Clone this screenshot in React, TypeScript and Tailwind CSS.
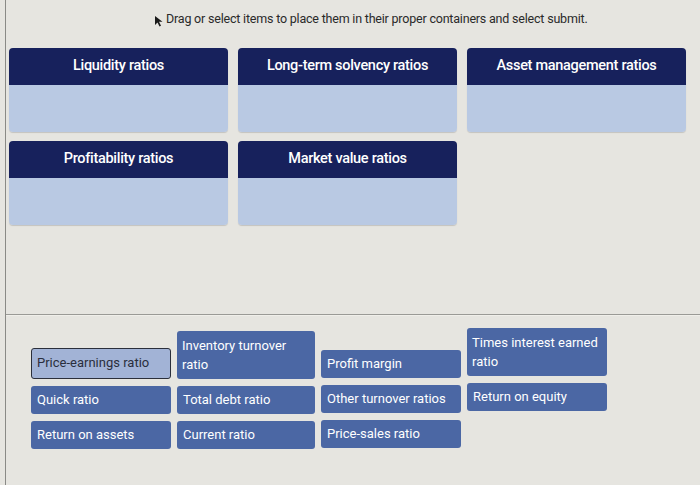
import React from "react";

const containers = [
  "Liquidity ratios",
  "Long-term solvency ratios",
  "Asset management ratios",
  "Profitability ratios",
  "Market value ratios",
];

function Container({ title }: { title: string }) {
  return (
    <div className="flex h-[84px] w-[219px] flex-col overflow-hidden rounded-[4px] shadow-[0_1px_1px_rgba(0,0,0,0.15)]">
      <div className="flex h-[37px] items-center justify-center bg-[#17215c] text-[14.5px] font-medium tracking-[-0.3px] text-white">
        {title}
      </div>
      <div className="flex-1 bg-[#b9c9e3]" />
    </div>
  );
}

function Item({ text, selected, tall }: { text: React.ReactNode; selected?: boolean; tall?: boolean }) {
  return (
    <div
      className={
        selected
          ? "flex h-[31px] items-center rounded-[3px] border-[1.5px] border-[#2b2f3b] bg-[#a2b3d6] px-[5px] text-[13px] leading-[16px] text-[#2a2f3d]"
          : tall
          ? "flex h-[48px] items-center rounded-[3px] bg-[#4b67a4] px-[5px] text-[13px] leading-[19px] text-white"
          : "flex h-[28px] items-center rounded-[3px] bg-[#4b67a4] px-[6px] text-[13px] leading-[16px] text-white"
      }
    >
      <span>{text}</span>
    </div>
  );
}

export default function App() {
  return (
    <div
      className="h-[485px] w-[700px] overflow-hidden bg-[#e6e5e0]"
      style={{ fontFamily: "Roboto, 'Liberation Sans', sans-serif" }}
    >
      <div className="ml-[5px] flex h-full flex-col border-l border-[#8a8a86]">
        <div className="flex items-center pl-[148px] pt-[10px] text-[12.5px] tracking-[-0.2px] text-[#2a2a2a]">
          <svg width="10" height="12" viewBox="0 0 10 12" className="mr-[2px] mt-[4px]">
            <path d="M1 1 L1 10 L3.5 7.5 L5.5 11.5 L7 10.8 L5 6.8 L8.5 6.8 Z" fill="#1a1a1a" />
          </svg>
          <span>Drag or select items to place them in their proper containers and select submit.</span>
        </div>

        <div className="mt-[19px] grid grid-cols-[219px_219px_219px] gap-x-[10px] gap-y-[9px] pl-[3px]">
          {containers.map((c) => (
            <Container key={c} title={c} />
          ))}
        </div>

        <div className="mt-[89px] h-[2px] border-t border-[#9a9a96] bg-[#f0efea]" />

        <div className="mt-[12px] grid grid-cols-[140px_138px_140px_140px] gap-x-[6px] pl-[25px]">
          <div className="flex flex-col gap-[7px] pt-[20px]">
            <Item text="Price-earnings ratio" selected />
            <Item text="Quick ratio" />
            <Item text="Return on assets" />
          </div>
          <div className="flex flex-col gap-[7px] pt-[3px]">
            <Item text={<>Inventory turnover<br />ratio</>} tall />
            <Item text="Total debt ratio" />
            <Item text="Current ratio" />
          </div>
          <div className="flex flex-col gap-[7px] pt-[22px]">
            <Item text="Profit margin" />
            <Item text="Other turnover ratios" />
            <Item text="Price-sales ratio" />
          </div>
          <div className="flex flex-col gap-[7px] pt-[0px]">
            <Item text={<>Times interest earned<br />ratio</>} tall />
            <Item text="Return on equity" />
          </div>
        </div>
      </div>
    </div>
  );
}
